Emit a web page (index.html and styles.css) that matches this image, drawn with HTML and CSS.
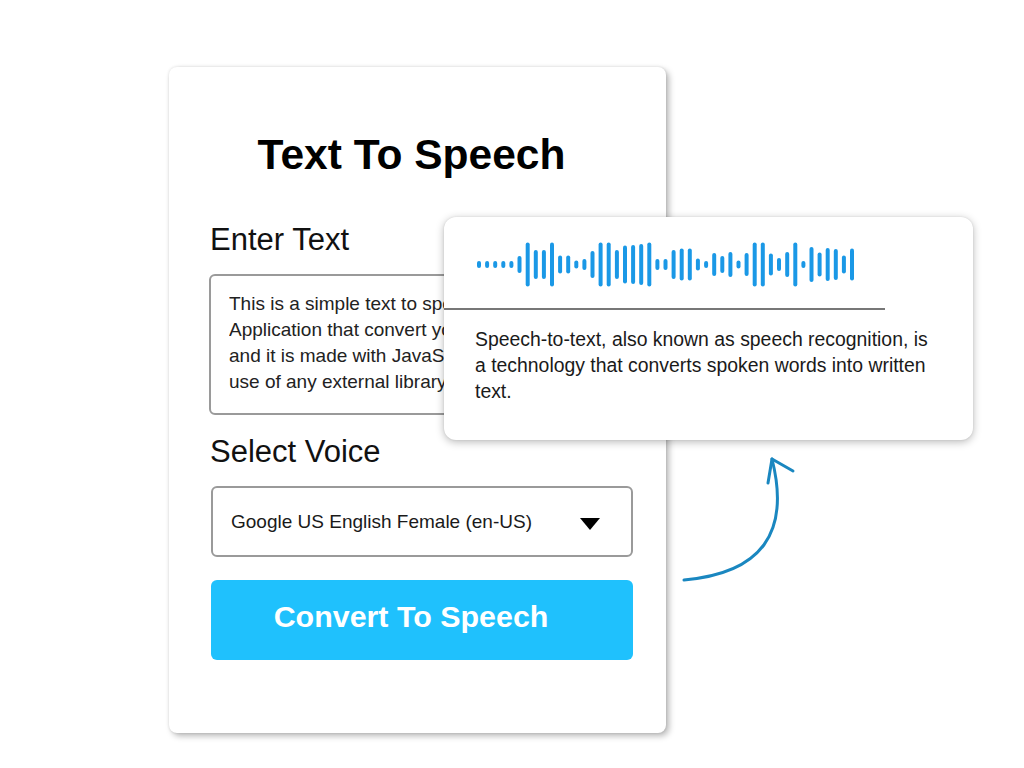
FILE: index.html
```html
<!DOCTYPE html>
<html lang="en">
<head>
<meta charset="utf-8">
<title>Text To Speech</title>
<link rel="stylesheet" href="styles.css">
</head>
<body>
<div class="stage">
  <div class="card">
    <h1 class="title">Text To Speech</h1>
    <h2 class="label label-first">Enter Text</h2>
    <div class="textarea">
      <div class="textarea-inner">This is a simple text to speech<br>Application that convert your text<br>and it is made with JavaScript without<br>use of any external library.</div>
    </div>
    <h2 class="label label-second">Select Voice</h2>
    <div class="select">
      <span class="select-text">Google US English Female (en-US)</span>
      <span class="caret"></span>
    </div>
    <div class="button">Convert To Speech</div>
  </div>

  <div class="popup">
    <svg class="wave" width="381" height="51" viewBox="0 0 381 51" fill="#1a98e6">
      <rect x="2.0" y="22" width="4" height="7" rx="2"/>
      <rect x="10.1" y="22" width="4" height="7" rx="2"/>
      <rect x="18.2" y="22" width="4" height="7" rx="2"/>
      <rect x="26.3" y="22" width="4" height="7" rx="2"/>
      <rect x="34.4" y="22" width="4" height="7" rx="2"/>
      <rect x="42.5" y="17" width="4" height="17" rx="2"/>
      <rect x="50.7" y="3.5" width="4" height="44" rx="2"/>
      <rect x="58.8" y="11" width="4" height="29" rx="2"/>
      <rect x="66.9" y="11" width="4" height="29" rx="2"/>
      <rect x="75.0" y="3.5" width="4" height="44" rx="2"/>
      <rect x="83.1" y="16.5" width="4" height="18" rx="2"/>
      <rect x="91.2" y="16.5" width="4" height="18" rx="2"/>
      <rect x="99.3" y="21.5" width="4" height="8" rx="2"/>
      <rect x="107.4" y="20" width="4" height="11" rx="2"/>
      <rect x="115.5" y="12" width="4" height="27" rx="2"/>
      <rect x="123.6" y="3.5" width="4" height="44" rx="2"/>
      <rect x="131.7" y="3.5" width="4" height="44" rx="2"/>
      <rect x="139.9" y="11" width="4" height="29" rx="2"/>
      <rect x="148.0" y="6.5" width="4" height="38" rx="2"/>
      <rect x="156.1" y="6" width="4" height="39" rx="2"/>
      <rect x="164.2" y="5" width="4" height="41" rx="2"/>
      <rect x="172.3" y="3.5" width="4" height="44" rx="2"/>
      <rect x="180.4" y="20" width="4" height="11" rx="2"/>
      <rect x="188.5" y="20" width="4" height="11" rx="2"/>
      <rect x="196.6" y="11" width="4" height="29" rx="2"/>
      <rect x="204.7" y="9.5" width="4" height="32" rx="2"/>
      <rect x="212.8" y="9.5" width="4" height="32" rx="2"/>
      <rect x="220.9" y="19.5" width="4" height="12" rx="2"/>
      <rect x="229.1" y="22" width="4" height="7" rx="2"/>
      <rect x="237.2" y="14" width="4" height="23" rx="2"/>
      <rect x="245.3" y="17" width="4" height="17" rx="2"/>
      <rect x="253.4" y="13" width="4" height="25" rx="2"/>
      <rect x="261.5" y="21.5" width="4" height="8" rx="2"/>
      <rect x="269.6" y="14" width="4" height="23" rx="2"/>
      <rect x="277.7" y="3.5" width="4" height="44" rx="2"/>
      <rect x="285.8" y="3.5" width="4" height="44" rx="2"/>
      <rect x="293.9" y="14.5" width="4" height="22" rx="2"/>
      <rect x="302.0" y="19" width="4" height="13" rx="2"/>
      <rect x="310.2" y="13" width="4" height="25" rx="2"/>
      <rect x="318.3" y="3.5" width="4" height="44" rx="2"/>
      <rect x="326.4" y="22" width="4" height="7" rx="2"/>
      <rect x="334.5" y="8" width="4" height="35" rx="2"/>
      <rect x="342.6" y="13.5" width="4" height="24" rx="2"/>
      <rect x="350.7" y="9" width="4" height="33" rx="2"/>
      <rect x="358.8" y="10" width="4" height="31" rx="2"/>
      <rect x="366.9" y="16.5" width="4" height="18" rx="2"/>
      <rect x="375.0" y="9.5" width="4" height="32" rx="2"/>
    </svg>
    <div class="divider"></div>
    <p class="ptext">Speech-to-text, also known as speech recognition, is a technology that converts spoken words into written text.</p>
  </div>

  <svg class="arrow" width="140" height="150" viewBox="0 0 140 150" fill="none" stroke="#1a87c0" stroke-width="3" stroke-linecap="round" stroke-linejoin="round">
    <path d="M14,135 Q130,125 102,14"/>
    <path d="M98,38 L102,14 L123,26"/>
  </svg>
</div>
</body>
</html>
```

FILE: styles.css
```css
html, body {
  margin: 0;
  padding: 0;
  background: #ffffff;
}

body {
  font-family: "Liberation Sans", Arial, sans-serif;
  color: #111111;
}

.stage {
  position: relative;
  width: 1024px;
  height: 768px;
  overflow: hidden;
  box-sizing: border-box;
  padding: 67px 0 0 169px;
}

.card {
  width: 497px;
  height: 666px;
  box-sizing: border-box;
  padding: 64px 33px 0 40px;
  background: #ffffff;
  border-radius: 8px;
  box-shadow: 3px 3px 6px rgba(0, 0, 0, 0.28), 0 0 3px rgba(0, 0, 0, 0.12);
}

.title {
  margin: 0;
  padding-right: 19px;
  font-size: 42.5px;
  line-height: 48px;
  font-weight: bold;
  text-align: center;
  color: #000000;
}

.label {
  margin: 0;
  padding-left: 1px;
  font-size: 31px;
  line-height: 34px;
  font-weight: normal;
  color: #111111;
}

.label-first {
  margin-top: 44px;
}

.label-second {
  margin-top: 20px;
}

.textarea {
  margin-top: 17px;
  height: 141px;
  box-sizing: border-box;
  border: 2px solid #9a9a9a;
  border-radius: 6px;
  padding: 15px 18px;
  font-size: 19px;
  line-height: 26px;
  color: #222222;
}

.textarea-inner {
  width: 215px;
  white-space: nowrap;
  overflow: hidden;
}

.select {
  margin: 17px 0 0 2px;
  height: 71px;
  box-sizing: border-box;
  border: 2px solid #9a9a9a;
  border-radius: 6px;
  padding: 0 31px 0 18px;
  display: flex;
  align-items: center;
  justify-content: space-between;
}

.select-text {
  font-size: 19px;
  line-height: 26px;
  color: #1a1a1a;
}

.caret {
  width: 0;
  height: 0;
  margin-top: 4px;
  border-left: 10px solid transparent;
  border-right: 10px solid transparent;
  border-top: 12px solid #000000;
}

.button {
  margin: 23px 0 0 2px;
  height: 80px;
  box-sizing: border-box;
  padding: 19px 22px 0 0;
  background: #1fc1fd;
  border-radius: 6px;
  color: #ffffff;
  font-size: 30.4px;
  line-height: 34px;
  font-weight: bold;
  text-align: center;
}

.popup {
  position: absolute;
  left: 444px;
  top: 217px;
  width: 529px;
  height: 223px;
  box-sizing: border-box;
  padding-top: 22px;
  background: #ffffff;
  border-radius: 12px;
  box-shadow: 0 2px 8px rgba(0, 0, 0, 0.28), 0 0 2px rgba(0, 0, 0, 0.1);
}

.wave {
  display: block;
  margin-left: 31px;
}

.divider {
  margin-top: 18px;
  width: 441px;
  height: 2px;
  background: #777777;
}

.ptext {
  margin: 16px 0 0 31px;
  width: 460px;
  font-size: 19.4px;
  line-height: 26px;
  color: #1a1a1a;
}

.arrow {
  position: absolute;
  left: 670px;
  top: 445px;
}
```
